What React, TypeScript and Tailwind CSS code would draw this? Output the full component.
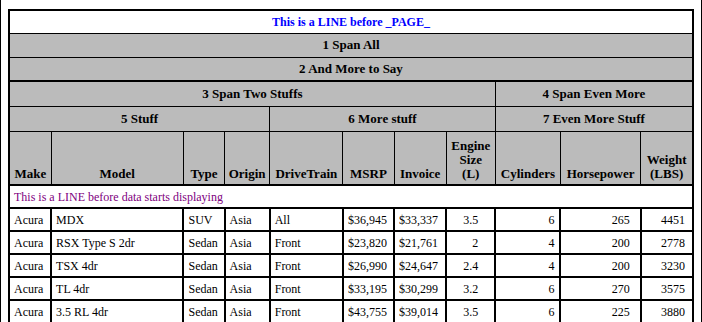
import React from "react";

const rows: string[][] = [
  ["Acura", "MDX", "SUV", "Asia", "All", "$36,945", "$33,337", "3.5", "6", "265", "4451"],
  ["Acura", "RSX Type S 2dr", "Sedan", "Asia", "Front", "$23,820", "$21,761", "2", "4", "200", "2778"],
  ["Acura", "TSX 4dr", "Sedan", "Asia", "Front", "$26,990", "$24,647", "2.4", "4", "200", "3230"],
  ["Acura", "TL 4dr", "Sedan", "Asia", "Front", "$33,195", "$30,299", "3.2", "6", "270", "3575"],
  ["Acura", "3.5 RL 4dr", "Sedan", "Asia", "Front", "$43,755", "$39,014", "3.5", "6", "225", "3880"],
];

// alignment / padding per data column
const cellPad = [
  "pl-[4px] text-left",
  "pl-[4px] text-left",
  "pl-[4px] text-left",
  "pl-[4px] text-left",
  "pl-[4px] text-left",
  "pl-[4px] text-left",
  "pl-[4px] text-left",
  "pr-[16px] text-right",
  "pr-[5px] text-right",
  "pr-[10px] text-right",
  "pr-[7px] text-right",
];

const colHeads: React.ReactNode[] = [
  "Make",
  "Model",
  "Type",
  "Origin",
  "DriveTrain",
  "MSRP",
  "Invoice",
  <>
    Engine
    <br />
    Size
    <br />
    (L)
  </>,
  "Cylinders",
  "Horsepower",
  <>
    Weight
    <br />
    (LBS)
  </>,
];

const th = "border border-black bg-[#bbbbbb] text-[13px] font-bold text-black text-center align-middle p-0";

export default function App() {
  return (
    <div className="w-[702px] h-[322px] overflow-hidden bg-white border-x border-black pl-[7px] pt-[9px] font-['Liberation_Serif',serif]">
      <table className="table-fixed w-[686px] border-collapse border-2 border-black leading-[14px]">
        <colgroup>
          <col className="w-[42px]" />
          <col className="w-[132px]" />
          <col className="w-[41px]" />
          <col className="w-[45px]" />
          <col className="w-[73px]" />
          <col className="w-[51px]" />
          <col className="w-[52px]" />
          <col className="w-[49px]" />
          <col className="w-[65px]" />
          <col className="w-[80px]" />
          <col className="w-[52px]" />
        </colgroup>
        <thead>
          <tr>
            <td colSpan={11} className="border border-black bg-white h-[23px] p-0 text-center text-[12px] font-bold text-[#0000ff]">
              This is a LINE before _PAGE_
            </td>
          </tr>
          <tr>
            <th colSpan={11} className={`${th} h-[24px]`}>1 Span All</th>
          </tr>
          <tr>
            <th colSpan={11} className={`${th} h-[24px]`}>2 And More to Say</th>
          </tr>
          <tr>
            <th colSpan={8} className={`${th} h-[25px] border-t-2`}>3 Span Two Stuffs</th>
            <th colSpan={3} className={`${th} h-[25px] border-t-2`}>4 Span Even More</th>
          </tr>
          <tr>
            <th colSpan={4} className={`${th} h-[25px]`}>5 Stuff</th>
            <th colSpan={4} className={`${th} h-[25px]`}>6 More stuff</th>
            <th colSpan={3} className={`${th} h-[25px]`}>7 Even More Stuff</th>
          </tr>
          <tr>
            {colHeads.map((h, i) => (
              <th
                key={i}
                className="border border-black border-b-2 bg-[#bbbbbb] text-[13px] font-bold text-black text-center align-bottom h-[54px] px-[2px] pb-[3px] pt-0"
              >
                {h}
              </th>
            ))}
          </tr>
        </thead>
        <tbody>
          <tr>
            <td colSpan={11} className="border-2 border-black bg-white h-[23px] pl-[4px] py-0 text-left text-[12px] text-[#800080]">
              This is a LINE before data starts displaying
            </td>
          </tr>
          {rows.map((r, i) => (
            <tr key={i}>
              {r.map((v, j) => (
                <td
                  key={j}
                  className={`border-2 border-black h-[23px] py-0 text-[12px] text-black whitespace-nowrap overflow-hidden ${cellPad[j]}`}
                >
                  {v}
                </td>
              ))}
            </tr>
          ))}
        </tbody>
      </table>
    </div>
  );
}
